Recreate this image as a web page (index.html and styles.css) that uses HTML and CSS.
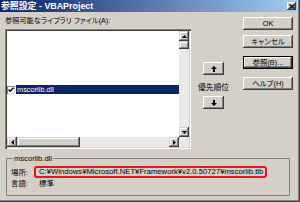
FILE: index.html
```html
<!DOCTYPE html>
<html lang="ja">
<head>
<meta charset="utf-8">
<title>参照設定 - VBAProject</title>
<link rel="stylesheet" href="styles.css">
</head>
<body>
<div class="win">
  <div class="title">
    <span class="title-text">参照設定 - VBAProject</span>
    <span class="close"><svg width="6" height="5" viewBox="0 0 6 5"><path d="M0.5 0.5 L5.5 4.5 M5.5 0.5 L0.5 4.5" stroke="#000" stroke-width="1.3" fill="none"/></svg></span>
  </div>
  <div class="top">
    <div class="left">
      <div class="lbl">参照可能なライブラリ ファイル(A):</div>
      <div class="list">
        <div class="items">
          <div class="row">
            <span class="chk"><svg width="6" height="6" viewBox="0 0 6 6"><path d="M0.5 2.5 L2.2 4.3 L5.5 0.8" stroke="#000" stroke-width="1.4" fill="none"/></svg></span>
            <span class="sel">mscorlib.dll</span>
          </div>
        </div>
        <div class="vscroll">
          <div class="sbtn"><svg width="5" height="3" viewBox="0 0 5 3"><path d="M0 3 L2.5 0 L5 3 Z" fill="#000"/></svg></div>
          <div class="thumb thumb-v"></div>
          <div class="track"></div>
          <div class="sbtn"><svg width="5" height="3" viewBox="0 0 5 3"><path d="M0 0 L2.5 3 L5 0 Z" fill="#000"/></svg></div>
        </div>
        <div class="hscroll">
          <div class="sbtn"><svg width="3" height="5" viewBox="0 0 3 5"><path d="M3 0 L0 2.5 L3 5 Z" fill="#000"/></svg></div>
          <div class="thumb thumb-h"></div>
          <div class="track"></div>
          <div class="sbtn"><svg width="3" height="5" viewBox="0 0 3 5"><path d="M0 0 L3 2.5 L0 5 Z" fill="#000"/></svg></div>
        </div>
        <div class="corner"></div>
      </div>
    </div>
    <div class="mid">
      <div class="btn arrow"><svg width="6" height="6" viewBox="0 0 6 6"><path d="M3 0 L6 3 H4 V6 H2 V3 H0 Z" fill="#000"/></svg></div>
      <div class="prio">優先順位</div>
      <div class="btn arrow arrow-down"><svg width="6" height="6" viewBox="0 0 6 6"><path d="M3 6 L6 3 H4 V0 H2 V3 H0 Z" fill="#000"/></svg></div>
    </div>
    <div class="right">
      <div class="btn">OK</div>
      <div class="btn b-cancel">キャンセル</div>
      <div class="btn b-browse">参照(B)...</div>
      <div class="btn b-help">ヘルプ(H)</div>
    </div>
  </div>
  <fieldset class="group">
    <legend>mscorlib.dll</legend>
    <div class="info">
      <span class="key">場所:</span><span class="path">C:¥Windows¥Microsoft.NET¥Framework¥v2.0.50727¥mscorlib.tlb</span>
      <span class="key">言語:</span><span class="val">標準</span>
    </div>
  </fieldset>
</div>
</body>
</html>
```

FILE: styles.css
```css
html, body {
  margin: 0;
  padding: 0;
}
body {
  width: 300px;
  height: 202px;
  overflow: hidden;
  background: #d4d0c8;
  color: #000;
  font-family: "Liberation Sans", "Noto Sans CJK JP", sans-serif;
  font-size: 7.4px;
  font-feature-settings: "palt";
}
.win {
  width: 300px;
  height: 202px;
  box-sizing: border-box;
  padding: 0 3px 4px 0;
  display: flex;
  flex-direction: column;
  box-shadow: inset -1px -1px #404040, inset -2px -2px #808080;
}
.title {
  height: 12px;
  flex: none;
  display: flex;
  align-items: center;
  justify-content: space-between;
  padding: 0 1px 0 1px;
  background: linear-gradient(to right, #0a246a, #a6caf0);
}
.title-text {
  color: #fff;
  font-weight: bold;
  font-size: 8.9px;
  line-height: 12px;
  white-space: nowrap;
}
.close {
  width: 9px;
  height: 8px;
  display: flex;
  align-items: center;
  justify-content: center;
  background: #d4d0c8;
  box-shadow: inset -1px -1px #404040, inset 1px 1px #fff, inset -2px -2px #808080;
}
.top {
  display: flex;
  align-items: flex-start;
  padding-left: 5px;
  flex: none;
}
.left {
  width: 186px;
  flex: none;
}
.lbl {
  margin-top: 4px;
  height: 9px;
  line-height: 9px;
  margin-bottom: 4px;
  white-space: nowrap;
  font-size: 7.2px;
}
.list {
  width: 186px;
  height: 120px;
  box-sizing: border-box;
  padding: 2px;
  background: #fff;
  box-shadow: inset 1px 1px #808080, inset 2px 2px #404040, inset -1px -1px #fff, inset -2px -2px #d4d0c8;
  display: grid;
  grid-template-columns: 1fr 10px;
  grid-template-rows: 1fr 10px;
}
.items {
  padding-top: 54px;
  overflow: hidden;
}
.row {
  display: flex;
  align-items: center;
  height: 9px;
}
.chk {
  width: 8px;
  height: 8px;
  flex: none;
  box-sizing: border-box;
  display: flex;
  align-items: center;
  justify-content: center;
  background: #fff;
  box-shadow: inset 1px 1px #808080, inset -1px -1px #d4d0c8;
  margin-right: 1px;
}
.sel {
  flex: 1;
  height: 9px;
  line-height: 9px;
  padding-left: 1px;
  background: #0a246a;
  color: #fff;
  white-space: nowrap;
}
.vscroll {
  display: flex;
  flex-direction: column;
}
.hscroll {
  display: flex;
}
.sbtn, .thumb {
  background: #d4d0c8;
  box-shadow: inset -1px -1px #404040, inset 1px 1px #d4d0c8, inset -2px -2px #808080, inset 2px 2px #fff;
}
.sbtn {
  width: 10px;
  height: 10px;
  flex: none;
  display: flex;
  align-items: center;
  justify-content: center;
}
.thumb-v {
  height: 8px;
  flex: none;
}
.thumb-h {
  width: 63px;
  flex: none;
}
.track {
  flex: 1;
  background: #ebe9e5;
}
.corner {
  background: #ebe9e5;
}
.btn {
  box-sizing: border-box;
  display: flex;
  align-items: center;
  justify-content: center;
  background: #d4d0c8;
  box-shadow: inset -1px -1px #404040, inset 1px 1px #fff, inset -2px -2px #808080;
  white-space: nowrap;
  line-height: 9px;
}
.mid {
  width: 21px;
  flex: none;
  margin-left: 12px;
  margin-top: 50px;
  display: flex;
  flex-direction: column;
  align-items: center;
}
.arrow {
  width: 21px;
  height: 13px;
}
.prio {
  margin-top: 8px;
  height: 9px;
  line-height: 9px;
  white-space: nowrap;
  font-size: 7.8px;
}
.arrow-down {
  margin-top: 4px;
}
.right {
  width: 50px;
  flex: none;
  margin-left: 19px;
  margin-top: 5px;
  display: flex;
  flex-direction: column;
}
.right .btn {
  width: 50px;
  height: 13px;
}
.b-cancel {
  margin-top: 5px;
}
.b-browse {
  margin-top: 8px;
  box-shadow: inset 0 0 0 1px #000, inset -2px -2px #404040, inset 2px 2px #fff, inset -3px -3px #808080;
}
.b-help {
  margin-top: 8px;
}
.group {
  margin: 5px 7px 0 6px;
  padding: 0 0 7px 4px;
  min-width: 0;
  border: 1px solid #808080;
  flex: none;
}
.group legend {
  padding: 0 1px;
  margin-left: 2px;
  line-height: 9px;
  height: 9px;
  font-size: 7.6px;
}
.info {
  display: grid;
  grid-template-columns: 28px auto;
  grid-template-rows: 12px 9px;
  row-gap: 1px;
  align-items: center;
  padding-top: 3px;
  line-height: 9px;
}
.path {
  box-sizing: border-box;
  width: 233px;
  height: 12px;
  margin-left: -5px;
  padding: 0 3px;
  border: 2px solid #e8141c;
  border-radius: 3px;
  line-height: 8px;
  white-space: nowrap;
  font-size: 7.7px;
}
```
